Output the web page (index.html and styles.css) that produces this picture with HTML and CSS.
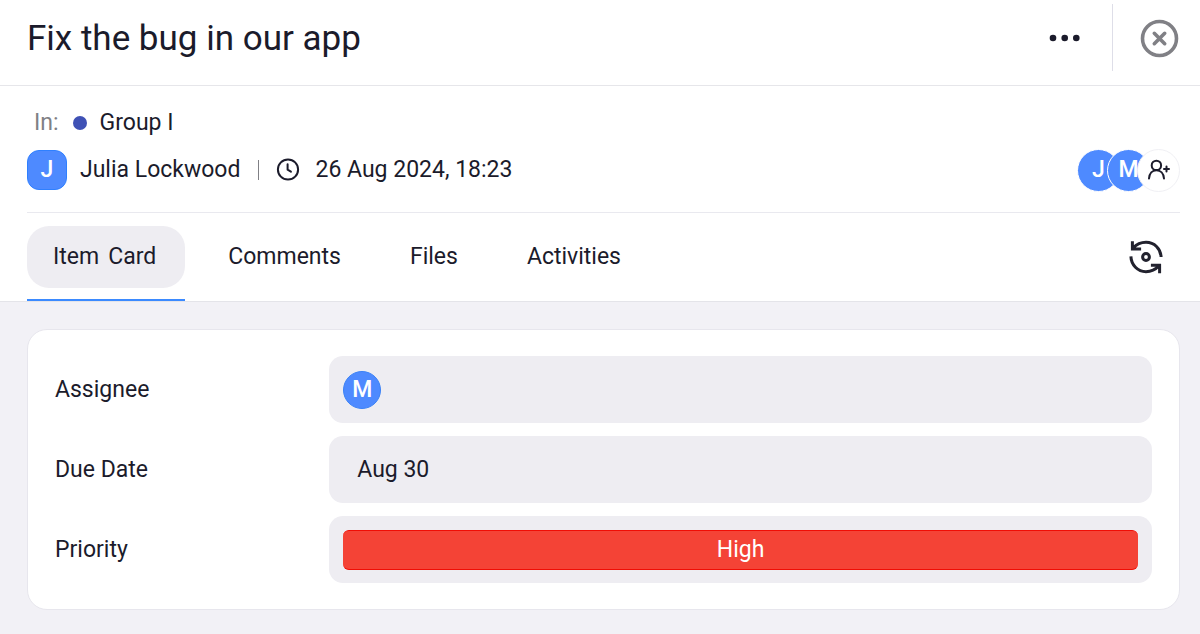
FILE: index.html
```
<!DOCTYPE html>
<html lang="en">
<head>
<meta charset="utf-8">
<title>Fix the bug in our app</title>
<link rel="stylesheet" href="styles.css">
</head>
<body>
<header class="header">
  <h1 class="title">Fix the bug in our app</h1>
  <button class="icon-button more" type="button" aria-label="More options">
    <svg width="32" height="8" viewBox="0 0 32 8" fill="#1b1b2b"><circle cx="4" cy="4" r="3.3"/><circle cx="15.7" cy="4" r="3.3"/><circle cx="27.3" cy="4" r="3.3"/></svg>
  </button>
  <div class="close-area">
    <button class="icon-button" type="button" aria-label="Close">
      <svg width="40" height="40" viewBox="0 0 40 40" fill="none" stroke="#808085" stroke-width="3.600" stroke-linecap="round"><circle cx="19.500" cy="20.500" r="17"/><path d="M14.300 15.300l10.400 10.400M24.700 15.300L14.300 25.700"/></svg>
    </button>
  </div>
</header>

<section class="meta">
  <div class="group"><span class="muted">In:</span><span class="dot"></span><span>Group I</span></div>
  <div class="author">
    <span class="avatar square">J</span>
    <span class="name">Julia Lockwood</span>
    <span class="divider"></span>
    <svg class="clock" width="24" height="24" viewBox="0 0 24 24" fill="none" stroke="#1b1b2b" stroke-width="2" stroke-linecap="round" stroke-linejoin="round"><circle cx="12" cy="11.500" r="10.1"/><path d="M11.6 6.300v5.400l3.300 2"/></svg>
    <time datetime="2024-08-26T18:23">26 Aug 2024, 18:23</time>
    <div class="members">
      <span class="avatar member">J</span>
      <span class="avatar member">M</span>
      <button class="member add" type="button" aria-label="Add member">
        <svg width="24" height="22" viewBox="0 0 24 22" fill="none" stroke="#1b1b2b" stroke-width="2" stroke-linecap="round"><circle cx="9.4" cy="6.4" r="4.7"/><path d="M2 19.5c.4-5 3.3-8.2 7.4-8.2s7.2 3.2 7.6 8.2M19.5 7.6v5M17 10.1h5"/></svg>
      </button>
    </div>
  </div>
</section>

<nav class="tabs">
  <button class="tab active" type="button"><span class="tab-label"><span>Item</span> <span>Card</span></span></button>
  <button class="tab" type="button"><span class="tab-label">Comments</span></button>
  <button class="tab" type="button"><span class="tab-label">Files</span></button>
  <button class="tab" type="button"><span class="tab-label">Activities</span></button>
  <button class="icon-button refresh" type="button" aria-label="Refresh">
    <svg width="36" height="36" viewBox="0 0 36 36" fill="none" stroke="#22222e" stroke-width="3"><circle cx="18" cy="18" r="3.4"/><path d="M4.400 2.200v7.800h8.700M5 9.200C8.500 5.400 13 3.300 18 3.300c8.300 0 14.700 6.300 15.100 14.700M2.900 17.400c.3 8.500 6.800 15.300 15.100 15.300 5 0 9.500-2.100 13-5.900M22.900 26.300h8.700v8"/></svg>
  </button>
</nav>

<main class="panel">
  <div class="card">
    <div class="row"><span class="label">Assignee</span><div class="field"><span class="avatar round">M</span></div></div>
    <div class="row"><label class="label" for="due">Due Date</label><input class="field date" id="due" type="text" value="Aug 30"></div>
    <div class="row"><span class="label">Priority</span><div class="field"><button class="priority" type="button">High</button></div></div>
  </div>
</main>
</body>
</html>
```
FILE: styles.css
```
* { box-sizing: border-box; }
body {
  margin: 0;
  min-height: 100vh;
  display: flex;
  flex-direction: column;
  background: #fff;
  color: #1b1b2b;
  font: 400 23px/32px Roboto, "Liberation Sans", sans-serif;
}
button, input { font: inherit; color: inherit; border: 0; margin: 0; padding: 0; background: none; }
button { cursor: pointer; }
svg { display: block; }

.header {
  display: flex;
  align-items: center;
  padding: 4px 20px 14px 27px;
  border-bottom: 1px solid #e6e6ea;
}
.title { flex: 1; margin: 0; padding-top: 2px; font-size: 35px; line-height: 44px; font-weight: 400; }
.more { margin-right: 31px; }
.close-area { display: flex; align-items: center; height: 67px; padding-left: 27px; border-left: 1px solid #dedee8; }

.meta { margin: 0 20px 0 27px; padding: 21px 0; border-bottom: 1px solid #e9e9ef; }
.group { display: flex; align-items: center; padding-left: 7px; }
.muted { color: #808085; }
.dot { width: 14px; height: 14px; margin: 0 13px 0 14px; border-radius: 50%; background: #3f51b5; }
.author { display: flex; align-items: center; margin-top: 10px; height: 42px; }
.avatar {
  display: flex;
  align-items: center;
  justify-content: center;
  background: #4e8aff;
  color: #fff;
  font-weight: 500;
}
.square { width: 40px; height: 40px; border-radius: 12px; border: 1px solid #2f80ff; }
.name { margin-left: 13px; }
.divider { width: 1px; height: 20px; margin: 0 17px 0 18px; background: #808085; }
.clock { margin-right: 15px; }
.members { display: flex; margin-left: auto; }
.member { width: 43px; height: 43px; border-radius: 50%; border: 1px solid #fff; }
.member + .member { margin-left: -13px; }
.add { display: flex; align-items: center; justify-content: center; background: #fff; border: 1px solid #f0f0f4; }

.tabs { display: flex; gap: 17px; padding: 13px 36px 0 27px; border-bottom: 1px solid #e4e4e9; }
.tab { padding-bottom: 11px; border-bottom: 2px solid transparent; }
.tab-label { display: flex; gap: 9px; padding: 15px 26px; border-radius: 22px; }
.active { border-bottom-color: #3b8aff; }
.active .tab-label { padding-right: 29px; background: #eeedf2; }
.refresh { margin: 0 0 13px auto; }

.panel { flex: 1; padding: 27px 20px 25px 27px; background: #f2f1f6; }
.card {
  display: flex;
  flex-direction: column;
  gap: 13px;
  padding: 26px 27px;
  background: #fff;
  border: 1px solid #e7e6ed;
  border-radius: 20px;
}
.row { display: grid; grid-template-columns: 1fr 3fr; align-items: center; }
.field { display: flex; align-items: center; width: 100%; height: 67px; padding: 0 14px; border-radius: 14px; background: #eeedf2; }
.date { padding: 0 28px; }
.round { width: 38px; height: 38px; border-radius: 50%; border: 1px solid #3b82f6; }
.priority { width: 100%; height: 40px; border: 1px solid #f00d05; border-width: 1px 0; border-radius: 6px; background: #f44336; color: #fff; }
```
